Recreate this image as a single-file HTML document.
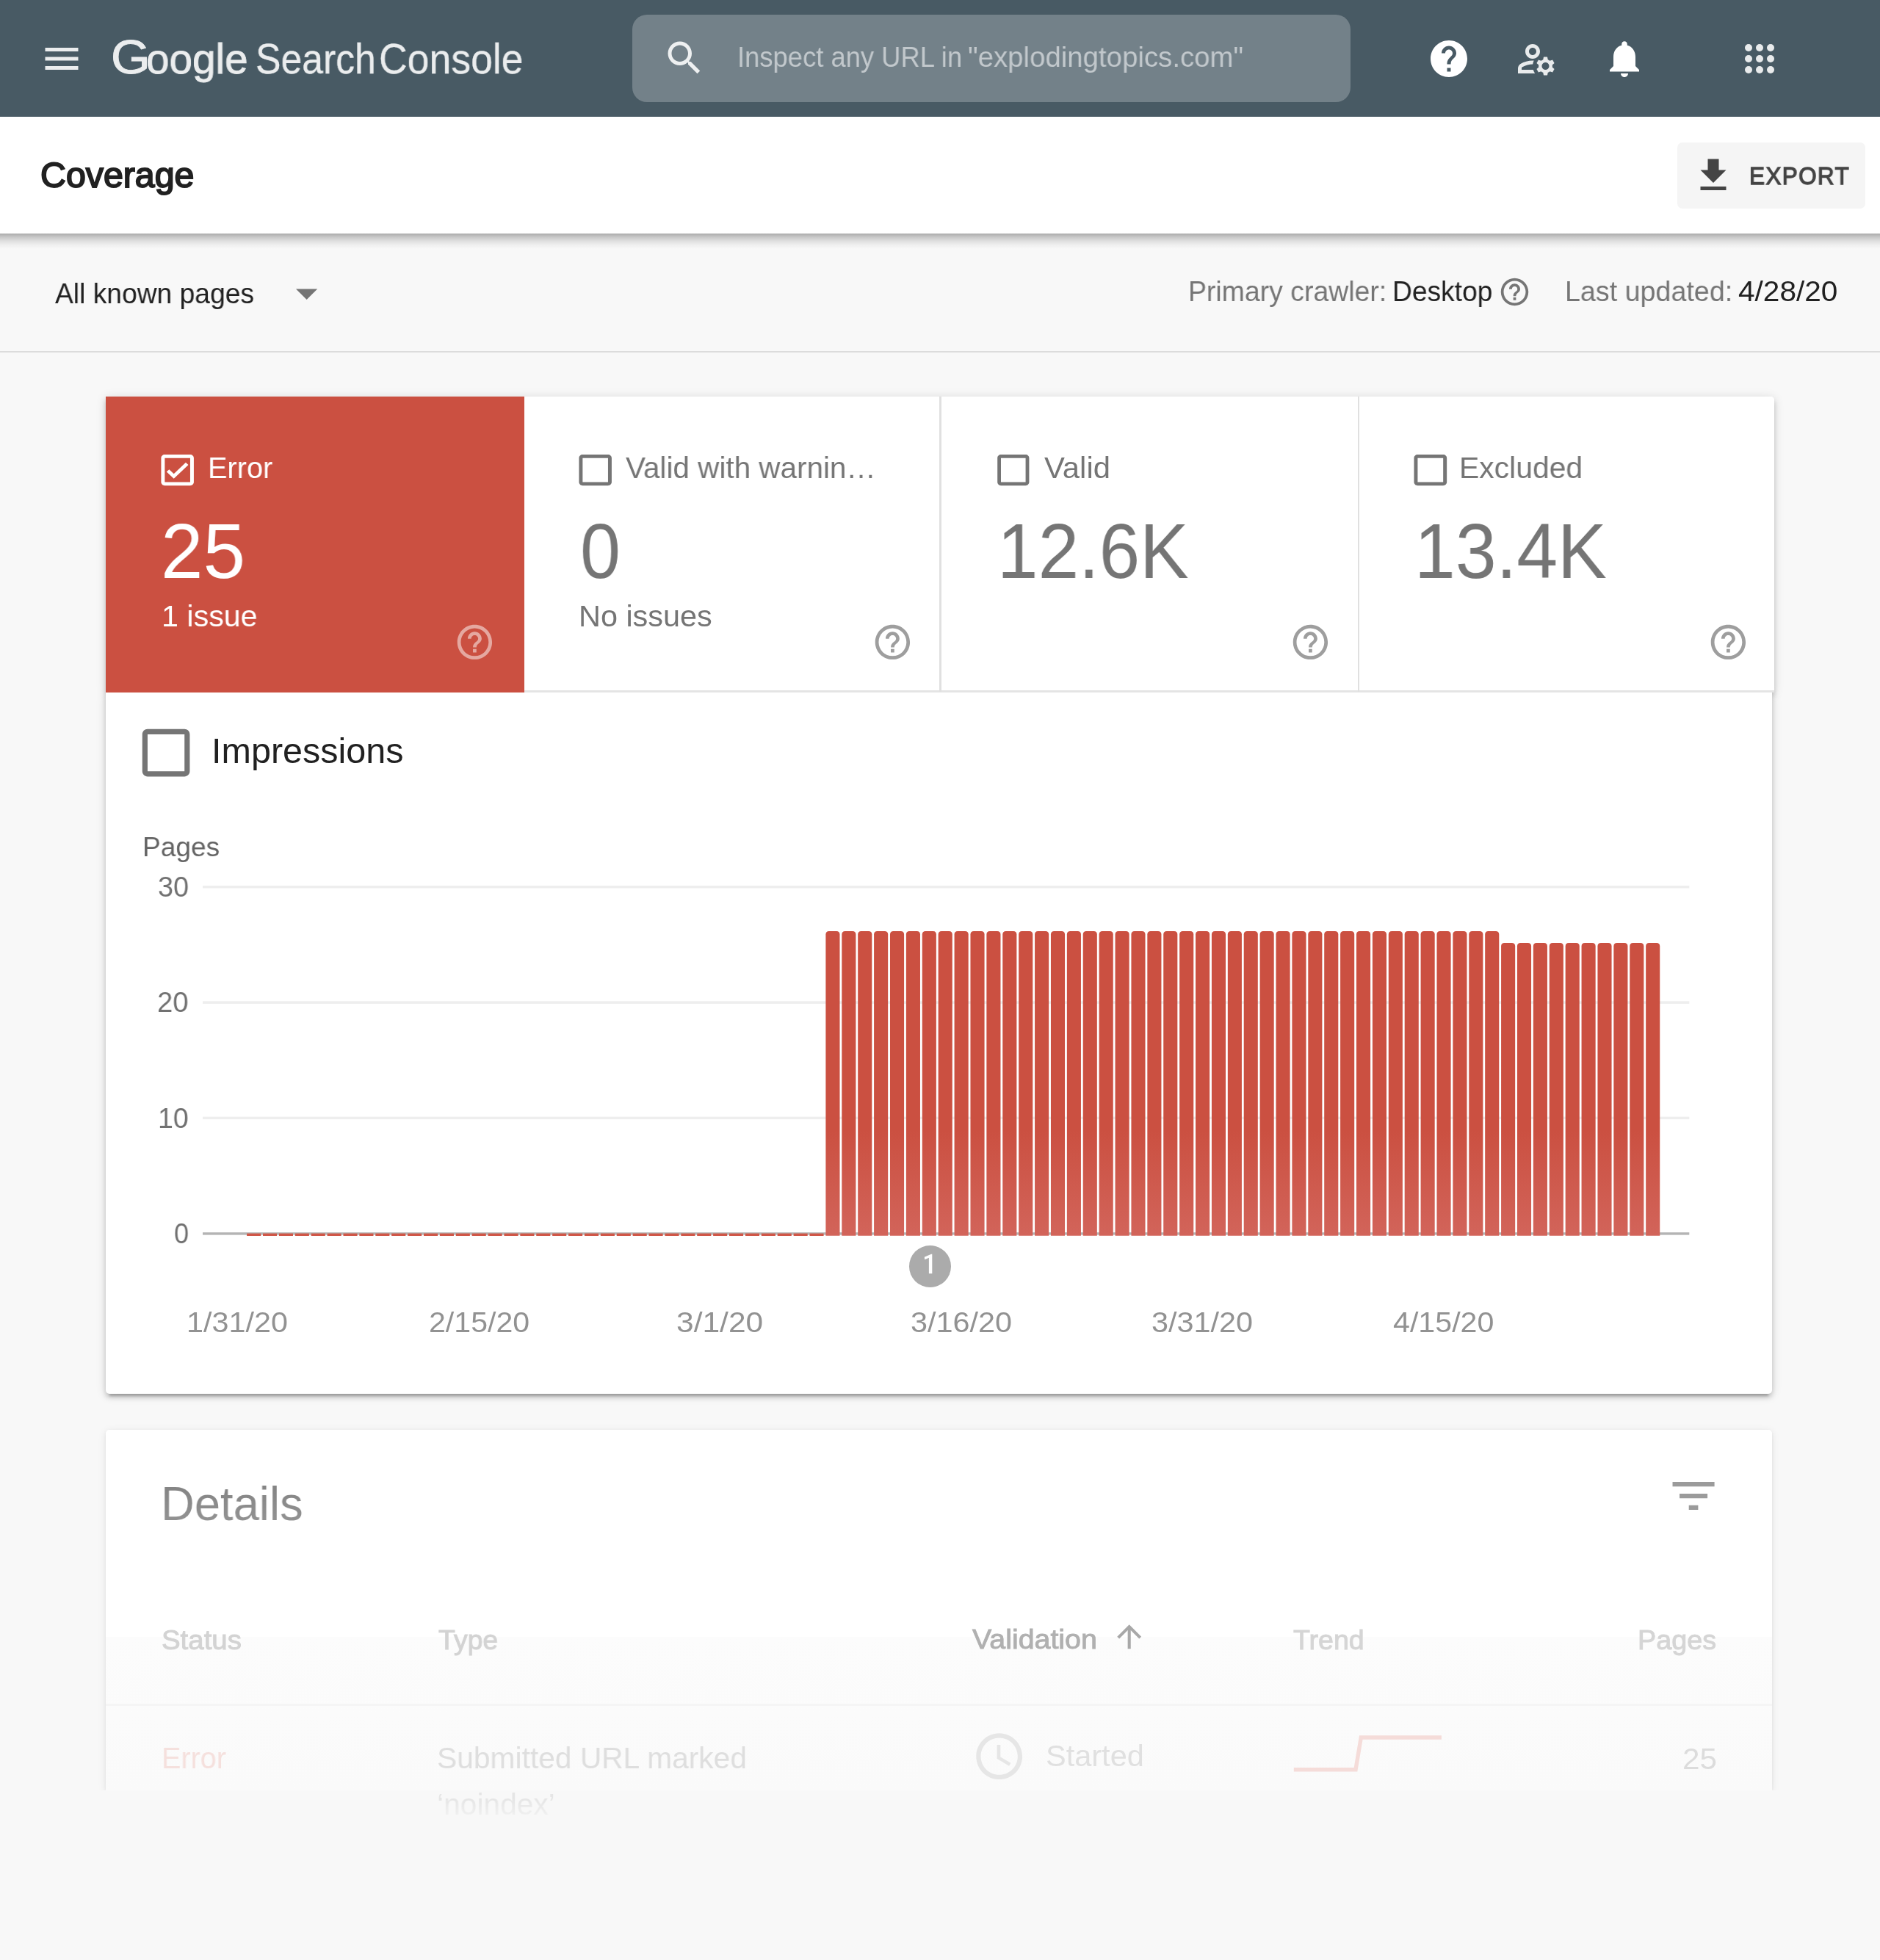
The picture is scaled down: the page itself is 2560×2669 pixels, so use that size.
<!DOCTYPE html>
<html><head><meta charset="utf-8"><title>Coverage</title>
<style>
html,body{margin:0;padding:0}
body{width:2560px;height:2669px;position:relative;overflow:hidden;background:#f8f8f8;font-family:"Liberation Sans",sans-serif}
.b{position:absolute}
.i{position:absolute;display:block;overflow:visible}
.t{position:absolute;white-space:nowrap;line-height:1;transform-origin:0 0;will-change:transform}
</style></head><body>
<div class="b" style="left:0;top:0;width:2560px;height:159px;background:#485a64"></div>
<svg class="i" style="left:54.10px;top:49.50px;" width="60" height="60" viewBox="0 0 24 24"><path fill="#ebedee" d="M3 18h18v-2H3v2zm0-5h18v-2H3v2zm0-7v2h18V6H3z"/></svg>
<div class="t" style="left:151.25px;top:46.32px;font-size:64px;color:#ebedee;transform:scaleX(1.0775);-webkit-text-stroke:0.9px #ebedee;">G</div>
<div class="t" style="left:199.22px;top:51.83px;font-size:57.5px;color:#ebedee;transform:scaleX(0.9848);-webkit-text-stroke:0.9px #ebedee;">oogle</div>
<div class="t" style="left:347.97px;top:52.67px;font-size:56.5px;color:#ebedee;transform:scaleX(0.9153);-webkit-text-stroke:0.3px #ebedee;">Search</div>
<div class="t" style="left:515.62px;top:52.67px;font-size:56.5px;color:#ebedee;transform:scaleX(0.9481);-webkit-text-stroke:0.3px #ebedee;">Console</div>
<div class="b" style="left:860.5px;top:20px;width:978px;height:118.6px;border-radius:20px;background:rgba(255,255,255,.24)"></div>
<svg class="i" style="left:902.40px;top:49.10px;" width="60" height="60" viewBox="0 0 24 24"><path fill="#eef0f1" d="M15.5 14h-.79l-.28-.27C15.41 12.59 16 11.11 16 9.5 16 5.91 13.09 3 9.5 3S3 5.91 3 9.5 5.91 16 9.5 16c1.61 0 3.09-.59 4.23-1.57l.27.28v.79l5 4.99L20.49 19l-4.99-5zm-6 0C7.01 14 5 11.99 5 9.5S7.01 5 9.5 5 14 7.01 14 9.5 11.99 14 9.5 14z"/></svg>
<div class="t" style="left:1003.95px;top:59.24px;font-size:38.7px;color:#c2c8cc;transform:scaleX(0.9406);">Inspect any URL in</div>
<div class="t" style="left:1318.49px;top:59.24px;font-size:38.7px;color:#c2c8cc;transform:scaleX(0.9923);">"explodingtopics.com"</div>
<svg class="i" style="left:1943.00px;top:49.50px;" width="60" height="60" viewBox="0 0 24 24"><path fill="#ffffff" d="M12 2C6.48 2 2 6.48 2 12s4.48 10 10 10 10-4.48 10-10S17.52 2 12 2zm1 17h-2v-2h2v2zm2.07-7.75l-.9.92C13.45 12.9 13 13.5 13 15h-2v-.5c0-1.1.45-2.1 1.17-2.83l1.24-1.26c.37-.36.59-.86.59-1.41 0-1.1-.9-2-2-2s-2 .9-2 2H8c0-2.21 1.79-4 4-4s4 1.79 4 4c0 .88-.36 1.68-.93 2.25z"/></svg>
<svg class="i" style="left:2061.80px;top:50.40px;" width="60" height="60" viewBox="0 0 24 24"><path fill="#e9ebec" d="M4 18v-.65c0-.34.16-.66.41-.81C6.1 15.53 8.03 15 10 15c.03 0 .05 0 .08.01.1-.7.3-1.37.59-1.98-.22-.02-.44-.03-.67-.03-2.42 0-4.68.67-6.61 1.82-.88.52-1.39 1.500-1.390 2.530V20h9.260c-.42-.6-.75-1.280-.97-2H4zM10 12c2.210 0 4-1.790 4-4s-1.790-4-4-4-4 1.790-4 4 1.790 4 4 4zm0-6c1.100 0 2 .9 2 2s-.9 2-2 2-2-.9-2-2 .9-2 2-2zM20.750 16c0-.22-.03-.42-.06-.63l1.140-1.010-1-1.730-1.450.49c-.32-.27-.68-.48-1.080-.63L18 11h-2l-.3 1.490c-.4.15-.76.36-1.080.63l-1.450-.49-1 1.730 1.140 1.010c-.03.21-.06.41-.06.63s.03.42.06.63l-1.140 1.010 1 1.730 1.450-.49c.32.27.68.48 1.080.63L16 21h2l.3-1.490c.4-.15.76-.36 1.080-.63l1.450.49 1-1.730-1.140-1.010c.03-.21.06-.41.06-.63zM17 18c-1.100 0-2-.9-2-2s.9-2 2-2 2 .9 2 2-.9 2-2 2z"/></svg>
<svg class="i" style="left:2182.10px;top:49.50px;" width="60" height="60" viewBox="0 0 24 24"><path fill="#ffffff" d="M12 22c1.1 0 2-.9 2-2h-4c0 1.1.89 2 2 2zm6-6v-5c0-3.07-1.64-5.64-4.5-6.32V4c0-.83-.67-1.500-1.500-1.500s-1.500.67-1.500 1.500v.68C7.630 5.360 6 7.920 6 11v5l-2 2v1h16v-1l-2-2z"/></svg>
<svg class="i" style="left:2366px;top:49.7px" width="60" height="60" viewBox="0 0 24 24"><circle cx="6" cy="6" r="2" fill="#e9ebec"/><circle cx="6" cy="12" r="2" fill="#e9ebec"/><circle cx="6" cy="18" r="2" fill="#e9ebec"/><circle cx="12" cy="6" r="2" fill="#e9ebec"/><circle cx="12" cy="12" r="2" fill="#e9ebec"/><circle cx="12" cy="18" r="2" fill="#e9ebec"/><circle cx="18" cy="6" r="2" fill="#e9ebec"/><circle cx="18" cy="12" r="2" fill="#e9ebec"/><circle cx="18" cy="18" r="2" fill="#e9ebec"/></svg>
<div class="b" style="left:0;top:159px;width:2560px;height:159px;background:#fff"></div>
<div class="b" style="left:0;top:318px;width:2560px;height:21px;background:linear-gradient(rgba(0,0,0,.31) 0,rgba(0,0,0,.2) 22%,rgba(0,0,0,.1) 48%,rgba(0,0,0,.035) 75%,rgba(0,0,0,0) 100%)"></div>
<div class="t" style="left:55.15px;top:214.45px;font-size:48.3px;color:#212121;-webkit-text-stroke:1.93px #212121;">Coverage</div>
<div class="b" style="left:2284px;top:194px;width:255.5px;height:89.5px;border-radius:7px;background:#f5f5f5"></div>
<svg class="i" style="left:2303.00px;top:209.00px;" width="60" height="60" viewBox="0 0 24 24"><path fill="#444444" d="M19 9h-4V3H9v6H5l7 7 7-7zM5 18v2h14v-2H5z"/></svg>
<div class="t" style="left:2382.49px;top:222.99px;font-size:33.6px;color:#444444;letter-spacing:1.5px;-webkit-text-stroke:1.34px #444444;transform:scaleX(0.9359);">EXPORT</div>
<div class="t" style="left:74.53px;top:380.78px;font-size:38.3px;color:#212121;transform:scaleX(0.9717);">All known pages</div>
<svg class="i" style="left:402.9px;top:392.5px" width="29.2" height="15.6" viewBox="0 0 10 5"><path d="M0 0h10l-5 5z" fill="#757575"/></svg>
<div class="t" style="left:1617.53px;top:378.28px;font-size:38.3px;color:#757575;transform:scaleX(0.9766);">Primary crawler:</div>
<div class="t" style="left:1895.85px;top:378.28px;font-size:38.3px;color:#212121;transform:scaleX(0.9700);">Desktop</div>
<svg class="i" style="left:2039.95px;top:375.40px;" width="45" height="45" viewBox="0 0 24 24"><path fill="#757575" d="M11 18h2v-2h-2v2zm1-16C6.48 2 2 6.48 2 12s4.48 10 10 10 10-4.48 10-10S17.52 2 12 2zm0 18c-4.41 0-8-3.59-8-8s3.59-8 8-8 8 3.59 8 8-3.59 8-8 8zm0-14c-2.21 0-4 1.79-4 4h2c0-1.1.9-2 2-2s2 .9 2 2c0 2-3 1.750-3 5h2c0-2.250 3-2.500 3-5 0-2.210-1.790-4-4-4z"/></svg>
<div class="t" style="left:2131.01px;top:378.28px;font-size:38.3px;color:#757575;transform:scaleX(0.9831);">Last updated:</div>
<div class="t" style="left:2367.11px;top:378.28px;font-size:38.3px;color:#212121;transform:scaleX(1.0600);">4/28/20</div>
<div class="b" style="left:0;top:477.8px;width:2560px;height:2.4px;background:#dcdcdc"></div>
<div class="b" style="left:144px;top:540px;width:2271.5px;height:403px;background:#fff;border-radius:2px 5px 0 0;box-shadow:0 5px 6px 0 rgba(0,0,0,.15),0 8px 3px -5px rgba(0,0,0,.2),0 2px 14px 0 rgba(0,0,0,.15)"></div>
<div class="b" style="left:144px;top:942.8px;width:2269.1px;height:955px;background:#fff;border-radius:0 0 5px 5px;box-shadow:0 5px 6px 0 rgba(0,0,0,.15),0 8px 3px -5px rgba(0,0,0,.2),0 2px 14px 0 rgba(0,0,0,.15)"></div>
<div class="b" style="left:144px;top:540px;width:2271.5px;height:402.8px;background:#fff;border-radius:2px 5px 0 0"></div>
<div class="b" style="left:144px;top:940.2px;width:2271.5px;height:2.7px;background:#e4e4e4"></div>
<div class="b" style="left:1279.0px;top:540px;width:2.5px;height:402px;background:#e0e0e0"></div>
<div class="b" style="left:1848.7px;top:540px;width:2.5px;height:402px;background:#e0e0e0"></div>
<div class="b" style="left:144px;top:540px;width:570px;height:402.8px;background:#cb5041"></div>
<svg class="i" style="left:211.68px;top:612.27px" width="59.33" height="56.25" viewBox="0 0 24 24" preserveAspectRatio="none"><path fill="#ffffff" d="M19 3H5c-1.1 0-2 .9-2 2v14c0 1.1.9 2 2 2h14c1.1 0 2-.9 2-2V5c0-1.1-.9-2-2-2zm0 16H5V5h14v14zM17.99 9l-1.41-1.420-6.590 6.590-2.580-2.570-1.420 1.410 4 3.990z"/></svg>
<div class="t" style="left:283.15px;top:617.29px;font-size:41.0px;color:#ffffff;transform:scaleX(0.9680);">Error</div>
<div class="t" style="left:219.33px;top:698.12px;font-size:105.0px;color:#ffffff;transform:scaleX(0.9841);">25</div>
<div class="t" style="left:220.07px;top:818.85px;font-size:41.4px;color:#ffffff;transform:scaleX(0.9961);">1 issue</div>
<svg class="i" style="left:618.40px;top:845.80px;" width="56.8" height="56.8" viewBox="0 0 24 24"><path fill="#ffffff" fill-opacity="0.5" d="M11 18h2v-2h-2v2zm1-16C6.48 2 2 6.48 2 12s4.48 10 10 10 10-4.48 10-10S17.52 2 12 2zm0 18c-4.41 0-8-3.59-8-8s3.59-8 8-8 8 3.59 8 8-3.59 8-8 8zm0-14c-2.21 0-4 1.79-4 4h2c0-1.1.9-2 2-2s2 .9 2 2c0 2-3 1.750-3 5h2c0-2.250 3-2.500 3-5 0-2.210-1.790-4-4-4z"/></svg>
<svg class="i" style="left:781.28px;top:612.27px" width="59.33" height="56.25" viewBox="0 0 24 24" preserveAspectRatio="none"><path fill="#757575" d="M19 5v14H5V5h14m0-2H5c-1.1 0-2 .9-2 2v14c0 1.1.9 2 2 2h14c1.1 0 2-.9 2-2V5c0-1.1-.9-2-2-2z"/></svg>
<div class="t" style="left:851.74px;top:617.29px;font-size:41.0px;color:#757575;transform:scaleX(0.9862);">Valid with warnin…</div>
<div class="t" style="left:789.55px;top:698.12px;font-size:105.0px;color:#757575;transform:scaleX(0.9405);">0</div>
<div class="t" style="left:788.10px;top:818.85px;font-size:41.4px;color:#757575;">No issues</div>
<svg class="i" style="left:1187.00px;top:845.80px;" width="56.8" height="56.8" viewBox="0 0 24 24"><path fill="#9e9e9e" d="M11 18h2v-2h-2v2zm1-16C6.48 2 2 6.48 2 12s4.48 10 10 10 10-4.48 10-10S17.52 2 12 2zm0 18c-4.41 0-8-3.59-8-8s3.59-8 8-8 8 3.59 8 8-3.59 8-8 8zm0-14c-2.21 0-4 1.79-4 4h2c0-1.1.9-2 2-2s2 .9 2 2c0 2-3 1.750-3 5h2c0-2.250 3-2.500 3-5 0-2.210-1.790-4-4-4z"/></svg>
<svg class="i" style="left:1350.80px;top:612.27px" width="57.60" height="56.25" viewBox="0 0 24 24" preserveAspectRatio="none"><path fill="#757575" d="M19 5v14H5V5h14m0-2H5c-1.1 0-2 .9-2 2v14c0 1.1.9 2 2 2h14c1.1 0 2-.9 2-2V5c0-1.1-.9-2-2-2z"/></svg>
<div class="t" style="left:1421.73px;top:617.29px;font-size:41.0px;color:#757575;transform:scaleX(1.0209);">Valid</div>
<div class="t" style="left:1357.72px;top:698.12px;font-size:105.0px;color:#757575;transform:scaleX(0.9501);">12.6K</div>
<svg class="i" style="left:1755.90px;top:845.80px;" width="56.8" height="56.8" viewBox="0 0 24 24"><path fill="#9e9e9e" d="M11 18h2v-2h-2v2zm1-16C6.48 2 2 6.48 2 12s4.48 10 10 10 10-4.48 10-10S17.52 2 12 2zm0 18c-4.41 0-8-3.59-8-8s3.59-8 8-8 8 3.59 8 8-3.59 8-8 8zm0-14c-2.21 0-4 1.79-4 4h2c0-1.1.9-2 2-2s2 .9 2 2c0 2-3 1.750-3 5h2c0-2.250 3-2.500 3-5 0-2.210-1.790-4-4-4z"/></svg>
<svg class="i" style="left:1918.05px;top:612.27px" width="59.60" height="56.25" viewBox="0 0 24 24" preserveAspectRatio="none"><path fill="#757575" d="M19 5v14H5V5h14m0-2H5c-1.1 0-2 .9-2 2v14c0 1.1.9 2 2 2h14c1.1 0 2-.9 2-2V5c0-1.1-.9-2-2-2z"/></svg>
<div class="t" style="left:1987.25px;top:617.29px;font-size:41.0px;color:#757575;transform:scaleX(0.9970);">Excluded</div>
<div class="t" style="left:1925.58px;top:698.12px;font-size:105.0px;color:#757575;transform:scaleX(0.9543);">13.4K</div>
<svg class="i" style="left:2324.70px;top:845.80px;" width="56.8" height="56.8" viewBox="0 0 24 24"><path fill="#9e9e9e" d="M11 18h2v-2h-2v2zm1-16C6.48 2 2 6.48 2 12s4.48 10 10 10 10-4.48 10-10S17.52 2 12 2zm0 18c-4.41 0-8-3.59-8-8s3.59-8 8-8 8 3.59 8 8-3.59 8-8 8zm0-14c-2.21 0-4 1.79-4 4h2c0-1.1.9-2 2-2s2 .9 2 2c0 2-3 1.750-3 5h2c0-2.250 3-2.500 3-5 0-2.210-1.790-4-4-4z"/></svg>
<svg class="i" style="left:183.40px;top:981.80px;" width="86.2" height="86.2" viewBox="0 0 24 24"><path fill="#757575" d="M19 5v14H5V5h14m0-2H5c-1.1 0-2 .9-2 2v14c0 1.1.9 2 2 2h14c1.1 0 2-.9 2-2V5c0-1.1-.9-2-2-2z"/></svg>
<div class="t" style="left:287.84px;top:999.05px;font-size:47.9px;color:#212121;transform:scaleX(1.0131);">Impressions</div>
<div class="t" style="left:194.46px;top:1135.20px;font-size:37.8px;color:#646464;transform:scaleX(0.9815);">Pages</div>
<div class="t" style="left:214.76px;top:1188.18px;font-size:39.6px;color:#717171;transform:scaleX(0.9555);">30</div>
<div class="t" style="left:214.29px;top:1345.48px;font-size:39.6px;color:#717171;transform:scaleX(0.9667);">20</div>
<div class="t" style="left:215.15px;top:1502.78px;font-size:39.6px;color:#717171;transform:scaleX(0.9463);">10</div>
<div class="t" style="left:236.69px;top:1660.08px;font-size:39.6px;color:#717171;transform:scaleX(0.9120);">0</div>
<svg class="i" style="left:0;top:0" width="2560" height="1900" viewBox="0 0 2560 1900"><defs><linearGradient id="bg" gradientUnits="userSpaceOnUse" x1="0" y1="1268" x2="0" y2="1682.8"><stop offset="0" stop-color="#cb5041"/><stop offset="0.655" stop-color="#cb5041"/><stop offset="1" stop-color="#d2645a"/></linearGradient></defs><rect x="276" y="1206.05" width="2024.3" height="3.5" fill="#eeeeee"/><rect x="276" y="1363.35" width="2024.3" height="3.5" fill="#eeeeee"/><rect x="276" y="1520.65" width="2024.3" height="3.5" fill="#eeeeee"/><rect x="276" y="1678.2" width="2024.3" height="3.4" fill="#b4b4b4"/><rect x="336.10" y="1679.6" width="19.1" height="3.4" fill="#d05748"/><rect x="358.00" y="1679.6" width="19.1" height="3.4" fill="#d05748"/><rect x="379.89" y="1679.6" width="19.1" height="3.4" fill="#d05748"/><rect x="401.79" y="1679.6" width="19.1" height="3.4" fill="#d05748"/><rect x="423.69" y="1679.6" width="19.1" height="3.4" fill="#d05748"/><rect x="445.59" y="1679.6" width="19.1" height="3.4" fill="#d05748"/><rect x="467.48" y="1679.6" width="19.1" height="3.4" fill="#d05748"/><rect x="489.38" y="1679.6" width="19.1" height="3.4" fill="#d05748"/><rect x="511.28" y="1679.6" width="19.1" height="3.4" fill="#d05748"/><rect x="533.17" y="1679.6" width="19.1" height="3.4" fill="#d05748"/><rect x="555.07" y="1679.6" width="19.1" height="3.4" fill="#d05748"/><rect x="576.97" y="1679.6" width="19.1" height="3.4" fill="#d05748"/><rect x="598.86" y="1679.6" width="19.1" height="3.4" fill="#d05748"/><rect x="620.76" y="1679.6" width="19.1" height="3.4" fill="#d05748"/><rect x="642.66" y="1679.6" width="19.1" height="3.4" fill="#d05748"/><rect x="664.56" y="1679.6" width="19.1" height="3.4" fill="#d05748"/><rect x="686.45" y="1679.6" width="19.1" height="3.4" fill="#d05748"/><rect x="708.35" y="1679.6" width="19.1" height="3.4" fill="#d05748"/><rect x="730.25" y="1679.6" width="19.1" height="3.4" fill="#d05748"/><rect x="752.14" y="1679.6" width="19.1" height="3.4" fill="#d05748"/><rect x="774.04" y="1679.6" width="19.1" height="3.4" fill="#d05748"/><rect x="795.94" y="1679.6" width="19.1" height="3.4" fill="#d05748"/><rect x="817.83" y="1679.6" width="19.1" height="3.4" fill="#d05748"/><rect x="839.73" y="1679.6" width="19.1" height="3.4" fill="#d05748"/><rect x="861.63" y="1679.6" width="19.1" height="3.4" fill="#d05748"/><rect x="883.52" y="1679.6" width="19.1" height="3.4" fill="#d05748"/><rect x="905.42" y="1679.6" width="19.1" height="3.4" fill="#d05748"/><rect x="927.32" y="1679.6" width="19.1" height="3.4" fill="#d05748"/><rect x="949.22" y="1679.6" width="19.1" height="3.4" fill="#d05748"/><rect x="971.11" y="1679.6" width="19.1" height="3.4" fill="#d05748"/><rect x="993.01" y="1679.6" width="19.1" height="3.4" fill="#d05748"/><rect x="1014.91" y="1679.6" width="19.1" height="3.4" fill="#d05748"/><rect x="1036.80" y="1679.6" width="19.1" height="3.4" fill="#d05748"/><rect x="1058.70" y="1679.6" width="19.1" height="3.4" fill="#d05748"/><rect x="1080.60" y="1679.6" width="19.1" height="3.4" fill="#d05748"/><rect x="1102.49" y="1679.6" width="19.1" height="3.4" fill="#d05748"/><path d="M1124.39 1682.8V1272.5Q1124.39 1268.0 1128.89 1268.0H1138.99Q1143.49 1268.0 1143.49 1272.5V1682.8Z" fill="url(#bg)"/><path d="M1146.29 1682.8V1272.5Q1146.29 1268.0 1150.79 1268.0H1160.89Q1165.39 1268.0 1165.39 1272.5V1682.8Z" fill="url(#bg)"/><path d="M1168.19 1682.8V1272.5Q1168.19 1268.0 1172.69 1268.0H1182.79Q1187.29 1268.0 1187.29 1272.5V1682.8Z" fill="url(#bg)"/><path d="M1190.08 1682.8V1272.5Q1190.08 1268.0 1194.58 1268.0H1204.68Q1209.18 1268.0 1209.18 1272.5V1682.8Z" fill="url(#bg)"/><path d="M1211.98 1682.8V1272.5Q1211.98 1268.0 1216.48 1268.0H1226.58Q1231.08 1268.0 1231.08 1272.5V1682.8Z" fill="url(#bg)"/><path d="M1233.88 1682.8V1272.5Q1233.88 1268.0 1238.38 1268.0H1248.48Q1252.98 1268.0 1252.98 1272.5V1682.8Z" fill="url(#bg)"/><path d="M1255.77 1682.8V1272.5Q1255.77 1268.0 1260.27 1268.0H1270.37Q1274.87 1268.0 1274.87 1272.5V1682.8Z" fill="url(#bg)"/><path d="M1277.67 1682.8V1272.5Q1277.67 1268.0 1282.17 1268.0H1292.27Q1296.77 1268.0 1296.77 1272.5V1682.8Z" fill="url(#bg)"/><path d="M1299.57 1682.8V1272.5Q1299.57 1268.0 1304.07 1268.0H1314.17Q1318.67 1268.0 1318.67 1272.5V1682.8Z" fill="url(#bg)"/><path d="M1321.46 1682.8V1272.5Q1321.46 1268.0 1325.96 1268.0H1336.06Q1340.56 1268.0 1340.56 1272.5V1682.8Z" fill="url(#bg)"/><path d="M1343.36 1682.8V1272.5Q1343.36 1268.0 1347.86 1268.0H1357.96Q1362.46 1268.0 1362.46 1272.5V1682.8Z" fill="url(#bg)"/><path d="M1365.26 1682.8V1272.5Q1365.26 1268.0 1369.76 1268.0H1379.86Q1384.36 1268.0 1384.36 1272.5V1682.8Z" fill="url(#bg)"/><path d="M1387.16 1682.8V1272.5Q1387.16 1268.0 1391.66 1268.0H1401.76Q1406.26 1268.0 1406.26 1272.5V1682.8Z" fill="url(#bg)"/><path d="M1409.05 1682.8V1272.5Q1409.05 1268.0 1413.55 1268.0H1423.65Q1428.15 1268.0 1428.15 1272.5V1682.8Z" fill="url(#bg)"/><path d="M1430.95 1682.8V1272.5Q1430.95 1268.0 1435.45 1268.0H1445.55Q1450.05 1268.0 1450.05 1272.5V1682.8Z" fill="url(#bg)"/><path d="M1452.85 1682.8V1272.5Q1452.85 1268.0 1457.35 1268.0H1467.45Q1471.95 1268.0 1471.95 1272.5V1682.8Z" fill="url(#bg)"/><path d="M1474.74 1682.8V1272.5Q1474.74 1268.0 1479.24 1268.0H1489.34Q1493.84 1268.0 1493.84 1272.5V1682.8Z" fill="url(#bg)"/><path d="M1496.64 1682.8V1272.5Q1496.64 1268.0 1501.14 1268.0H1511.24Q1515.74 1268.0 1515.74 1272.5V1682.8Z" fill="url(#bg)"/><path d="M1518.54 1682.8V1272.5Q1518.54 1268.0 1523.04 1268.0H1533.14Q1537.64 1268.0 1537.64 1272.5V1682.8Z" fill="url(#bg)"/><path d="M1540.43 1682.8V1272.5Q1540.43 1268.0 1544.93 1268.0H1555.03Q1559.53 1268.0 1559.53 1272.5V1682.8Z" fill="url(#bg)"/><path d="M1562.33 1682.8V1272.5Q1562.33 1268.0 1566.83 1268.0H1576.93Q1581.43 1268.0 1581.43 1272.5V1682.8Z" fill="url(#bg)"/><path d="M1584.23 1682.8V1272.5Q1584.23 1268.0 1588.73 1268.0H1598.83Q1603.33 1268.0 1603.33 1272.5V1682.8Z" fill="url(#bg)"/><path d="M1606.13 1682.8V1272.5Q1606.13 1268.0 1610.63 1268.0H1620.73Q1625.23 1268.0 1625.23 1272.5V1682.8Z" fill="url(#bg)"/><path d="M1628.02 1682.8V1272.5Q1628.02 1268.0 1632.52 1268.0H1642.62Q1647.12 1268.0 1647.12 1272.5V1682.8Z" fill="url(#bg)"/><path d="M1649.92 1682.8V1272.5Q1649.92 1268.0 1654.42 1268.0H1664.52Q1669.02 1268.0 1669.02 1272.5V1682.8Z" fill="url(#bg)"/><path d="M1671.82 1682.8V1272.5Q1671.82 1268.0 1676.32 1268.0H1686.42Q1690.92 1268.0 1690.92 1272.5V1682.8Z" fill="url(#bg)"/><path d="M1693.71 1682.8V1272.5Q1693.71 1268.0 1698.21 1268.0H1708.31Q1712.81 1268.0 1712.81 1272.5V1682.8Z" fill="url(#bg)"/><path d="M1715.61 1682.8V1272.5Q1715.61 1268.0 1720.11 1268.0H1730.21Q1734.71 1268.0 1734.71 1272.5V1682.8Z" fill="url(#bg)"/><path d="M1737.51 1682.8V1272.5Q1737.51 1268.0 1742.01 1268.0H1752.11Q1756.61 1268.0 1756.61 1272.5V1682.8Z" fill="url(#bg)"/><path d="M1759.40 1682.8V1272.5Q1759.40 1268.0 1763.90 1268.0H1774.00Q1778.50 1268.0 1778.50 1272.5V1682.8Z" fill="url(#bg)"/><path d="M1781.30 1682.8V1272.5Q1781.30 1268.0 1785.80 1268.0H1795.90Q1800.40 1268.0 1800.40 1272.5V1682.8Z" fill="url(#bg)"/><path d="M1803.20 1682.8V1272.5Q1803.20 1268.0 1807.70 1268.0H1817.80Q1822.30 1268.0 1822.30 1272.5V1682.8Z" fill="url(#bg)"/><path d="M1825.10 1682.8V1272.5Q1825.10 1268.0 1829.60 1268.0H1839.70Q1844.20 1268.0 1844.20 1272.5V1682.8Z" fill="url(#bg)"/><path d="M1846.99 1682.8V1272.5Q1846.99 1268.0 1851.49 1268.0H1861.59Q1866.09 1268.0 1866.09 1272.5V1682.8Z" fill="url(#bg)"/><path d="M1868.89 1682.8V1272.5Q1868.89 1268.0 1873.39 1268.0H1883.49Q1887.99 1268.0 1887.99 1272.5V1682.8Z" fill="url(#bg)"/><path d="M1890.79 1682.8V1272.5Q1890.79 1268.0 1895.29 1268.0H1905.39Q1909.89 1268.0 1909.89 1272.5V1682.8Z" fill="url(#bg)"/><path d="M1912.68 1682.8V1272.5Q1912.68 1268.0 1917.18 1268.0H1927.28Q1931.78 1268.0 1931.78 1272.5V1682.8Z" fill="url(#bg)"/><path d="M1934.58 1682.8V1272.5Q1934.58 1268.0 1939.08 1268.0H1949.18Q1953.68 1268.0 1953.68 1272.5V1682.8Z" fill="url(#bg)"/><path d="M1956.48 1682.8V1272.5Q1956.48 1268.0 1960.98 1268.0H1971.08Q1975.58 1268.0 1975.58 1272.5V1682.8Z" fill="url(#bg)"/><path d="M1978.38 1682.8V1272.5Q1978.38 1268.0 1982.88 1268.0H1992.97Q1997.47 1268.0 1997.47 1272.5V1682.8Z" fill="url(#bg)"/><path d="M2000.27 1682.8V1272.5Q2000.27 1268.0 2004.77 1268.0H2014.87Q2019.37 1268.0 2019.37 1272.5V1682.8Z" fill="url(#bg)"/><path d="M2022.17 1682.8V1272.5Q2022.17 1268.0 2026.67 1268.0H2036.77Q2041.27 1268.0 2041.27 1272.5V1682.8Z" fill="url(#bg)"/><path d="M2044.07 1682.8V1288.5Q2044.07 1284.0 2048.57 1284.0H2058.67Q2063.17 1284.0 2063.17 1288.5V1682.8Z" fill="url(#bg)"/><path d="M2065.96 1682.8V1288.5Q2065.96 1284.0 2070.46 1284.0H2080.56Q2085.06 1284.0 2085.06 1288.5V1682.8Z" fill="url(#bg)"/><path d="M2087.86 1682.8V1288.5Q2087.86 1284.0 2092.36 1284.0H2102.46Q2106.96 1284.0 2106.96 1288.5V1682.8Z" fill="url(#bg)"/><path d="M2109.76 1682.8V1288.5Q2109.76 1284.0 2114.26 1284.0H2124.36Q2128.86 1284.0 2128.86 1288.5V1682.8Z" fill="url(#bg)"/><path d="M2131.65 1682.8V1288.5Q2131.65 1284.0 2136.15 1284.0H2146.25Q2150.75 1284.0 2150.75 1288.5V1682.8Z" fill="url(#bg)"/><path d="M2153.55 1682.8V1288.5Q2153.55 1284.0 2158.05 1284.0H2168.15Q2172.65 1284.0 2172.65 1288.5V1682.8Z" fill="url(#bg)"/><path d="M2175.45 1682.8V1288.5Q2175.45 1284.0 2179.95 1284.0H2190.05Q2194.55 1284.0 2194.55 1288.5V1682.8Z" fill="url(#bg)"/><path d="M2197.34 1682.8V1288.5Q2197.34 1284.0 2201.84 1284.0H2211.94Q2216.44 1284.0 2216.44 1288.5V1682.8Z" fill="url(#bg)"/><path d="M2219.24 1682.8V1288.5Q2219.24 1284.0 2223.74 1284.0H2233.84Q2238.34 1284.0 2238.34 1288.5V1682.8Z" fill="url(#bg)"/><path d="M2241.14 1682.8V1288.5Q2241.14 1284.0 2245.64 1284.0H2255.74Q2260.24 1284.0 2260.24 1288.5V1682.8Z" fill="url(#bg)"/></svg>
<div class="b" style="left:1237.7px;top:1695.6px;width:57px;height:57px;border-radius:50%;background:#ababab"></div>
<svg class="i" style="left:1237px;top:1695px" width="60" height="60" viewBox="1237 1695 60 60"><path fill="#fff" d="M1268.1 1707.7H1269.3V1734.3H1264.9V1712.8L1259.2 1715.2L1258.8 1711.7Z"/></svg>
<div class="t" style="left:254.41px;top:1781.20px;font-size:39.1px;color:#929292;transform:scaleX(1.0581);">1/31/20</div>
<div class="t" style="left:583.74px;top:1781.20px;font-size:39.1px;color:#929292;transform:scaleX(1.0520);">2/15/20</div>
<div class="t" style="left:921.48px;top:1781.20px;font-size:39.1px;color:#929292;transform:scaleX(1.0877);">3/1/20</div>
<div class="t" style="left:1239.63px;top:1781.20px;font-size:39.1px;color:#929292;transform:scaleX(1.0591);">3/16/20</div>
<div class="t" style="left:1568.13px;top:1781.20px;font-size:39.1px;color:#929292;transform:scaleX(1.0591);">3/31/20</div>
<div class="t" style="left:1897.19px;top:1781.20px;font-size:39.1px;color:#929292;transform:scaleX(1.0539);">4/15/20</div>
<div class="b" style="left:144.3px;top:1947.3px;width:2268.8px;height:491px;background:linear-gradient(#fff 0,#fff 282.5px,#fcfcfc 282.5px,#fafafa 100%);border-radius:5px 5px 0 0;box-shadow:0 2px 12px rgba(0,0,0,.085),0 1px 4px rgba(0,0,0,.05)"></div>
<div class="b" style="left:0;top:2438.3px;width:2560px;height:240px;background:#f8f8f8"></div>
<div class="t" style="left:219.40px;top:2014.58px;font-size:65px;color:transparent;transform:scaleX(0.9747);background:linear-gradient(#858585 20%,#929292 85%);-webkit-background-clip:text;background-clip:text;">Details</div>
<svg class="i" style="left:2267.70px;top:1998.60px;" width="76.1" height="76.1" viewBox="0 0 24 24"><path fill="#9b9b9b" d="M10 18h4v-2h-4v2zM3 6v2h18V6H3zm3 7h12v-2H6v2z"/></svg>
<div class="t" style="left:220.04px;top:2214.50px;font-size:37.6px;color:#d3d3d3;-webkit-text-stroke:0.94px #d3d3d3;transform:scaleX(1.0223);">Status</div>
<div class="t" style="left:596.75px;top:2214.50px;font-size:37.6px;color:#d3d3d3;-webkit-text-stroke:0.94px #d3d3d3;transform:scaleX(0.9965);">Type</div>
<div class="t" style="left:1323.61px;top:2214.10px;font-size:37.6px;color:#b0b0b0;-webkit-text-stroke:0.94px #b0b0b0;transform:scaleX(1.0467);">Validation</div>
<svg class="i" style="left:1512.80px;top:2204.20px;" width="49.4" height="49.4" viewBox="0 0 24 24"><path fill="#a8a8a8" d="M4 12l1.41 1.41L11 7.83V20h2V7.83l5.58 5.59L20 12l-8-8-8 8z"/></svg>
<div class="t" style="left:1761.44px;top:2214.50px;font-size:37.6px;color:#d5d5d5;-webkit-text-stroke:0.94px #d5d5d5;">Trend</div>
<div class="t" style="left:2229.97px;top:2214.50px;font-size:37.6px;color:#d5d5d5;-webkit-text-stroke:0.94px #d5d5d5;transform:scaleX(1.0049);">Pages</div>
<div class="b" style="left:144.3px;top:2320.3px;width:2268.8px;height:2.5px;background:#f5f5f5"></div>
<div class="t" style="left:219.76px;top:2372.97px;font-size:41.5px;color:#f5e0dd;transform:scaleX(0.9530);">Error</div>
<div class="t" style="left:595.27px;top:2373.17px;font-size:41.5px;color:#dedede;transform:scaleX(0.9818);">Submitted URL marked</div>
<div class="t" style="left:594.57px;top:2436.27px;font-size:41.5px;color:transparent;transform:scaleX(0.9818);background:linear-gradient(#e5e5e5 30%,#efefef 80%);-webkit-background-clip:text;background-clip:text;">‘noindex’</div>
<svg class="i" style="left:1322.70px;top:2354.40px;" width="75.4" height="75.4" viewBox="0 0 24 24"><path fill="#e6e6e6" d="M11.99 2C6.47 2 2 6.48 2 12s4.47 10 9.99 10C17.52 22 22 17.52 22 12S17.52 2 11.990 2zM12 20c-4.420 0-8-3.580-8-8s3.580-8 8-8 8 3.580 8 8-3.580 8-8 8zm.5-13H11v6l5.250 3.150.75-1.230-4.500-2.670z"/></svg>
<div class="t" style="left:1423.63px;top:2370.37px;font-size:41.5px;color:#e0e0e0;">Started</div>
<svg class="i" style="left:1750px;top:2350px" width="230" height="80" viewBox="1750 2350 230 80"><path d="M1761.8 2409.7H1846L1853.3 2366H1962.9" fill="none" stroke="#f5dcd9" stroke-width="5.4"/></svg>
<div class="t" style="left:2290.78px;top:2373.57px;font-size:41.5px;color:#dcdcdc;transform:scaleX(1.0196);">25</div>
</body></html>
